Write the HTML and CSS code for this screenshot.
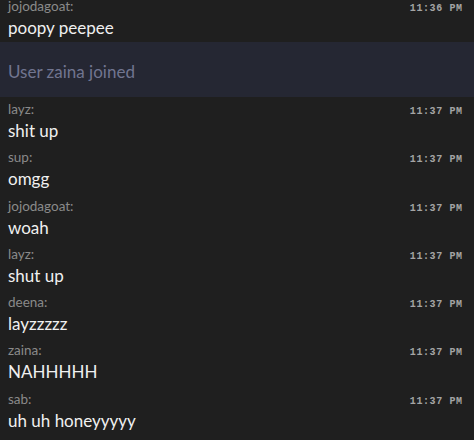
FILE: index.html
```html
<!DOCTYPE html>
<html>
<head>
<meta charset="utf-8">
<link rel="stylesheet" href="styles.css">
</head>
<body>
<div class="chat">
  <div class="msg">
    <div class="meta"><span class="name">jojodagoat:</span><span class="time">11:36 PM</span></div>
    <div class="text">poopy peepee</div>
  </div>
  <div class="notice">User zaina joined</div>
  <div class="msg">
    <div class="meta"><span class="name">layz:</span><span class="time">11:37 PM</span></div>
    <div class="text">shit up</div>
  </div>
  <div class="msg">
    <div class="meta"><span class="name">sup:</span><span class="time">11:37 PM</span></div>
    <div class="text">omgg</div>
  </div>
  <div class="msg">
    <div class="meta"><span class="name">jojodagoat:</span><span class="time">11:37 PM</span></div>
    <div class="text">woah</div>
  </div>
  <div class="msg">
    <div class="meta"><span class="name">layz:</span><span class="time">11:37 PM</span></div>
    <div class="text">shut up</div>
  </div>
  <div class="msg">
    <div class="meta"><span class="name">deena:</span><span class="time">11:37 PM</span></div>
    <div class="text">layzzzzz</div>
  </div>
  <div class="msg">
    <div class="meta"><span class="name">zaina:</span><span class="time">11:37 PM</span></div>
    <div class="text">NAHHHHH</div>
  </div>
  <div class="msg">
    <div class="meta"><span class="name">sab:</span><span class="time">11:37 PM</span></div>
    <div class="text">uh uh honeyyyyy</div>
  </div>
</div>
</body>
</html>
```

FILE: styles.css
```css
html, body {
  margin: 0;
  padding: 0;
  background: #1f1f1f;
  overflow: hidden;
}
.chat {
  margin-top: -6px;
  display: flex;
  flex-direction: column;
  font-family: Lato, "Open Sans", sans-serif;
}
.msg {
  height: 48.3px;
  box-sizing: border-box;
  padding: 4px 12px 0 8px;
  display: flex;
  flex-direction: column;
}
.meta {
  display: flex;
  justify-content: space-between;
  align-items: baseline;
  height: 16px;
  line-height: 16px;
}
.name {
  font-size: 13.5px;
  color: #8a8a8a;
}
.time {
  font-family: "Liberation Mono", "DejaVu Sans Mono", monospace;
  font-size: 10px;
  font-weight: bold;
  color: #a4a4a4;
  letter-spacing: 0.6px;
  margin-right: -0.6px;
}
.text {
  margin-top: 2px;
  font-size: 17px;
  line-height: 24px;
  color: #f0f0f0;
}
.notice {
  height: 54.7px;
  box-sizing: border-box;
  padding-left: 8px;
  display: flex;
  align-items: center;
  padding-top: 3px;
  background: #252733;
  color: #717590;
  font-size: 17px;
}
```
